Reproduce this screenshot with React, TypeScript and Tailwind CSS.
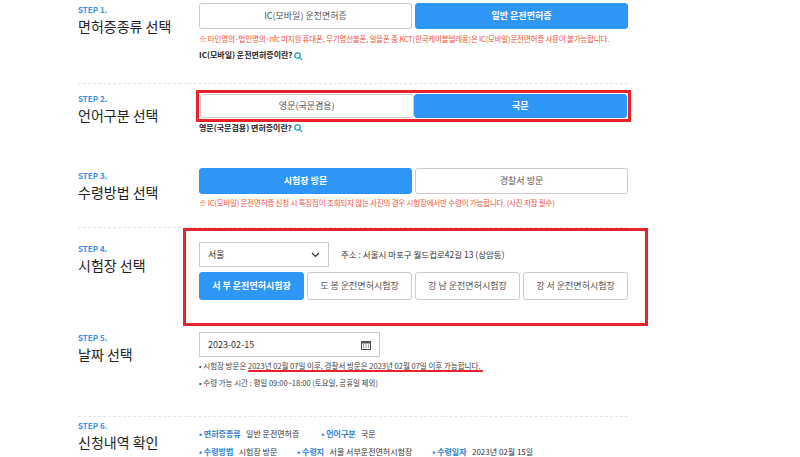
const blue = "bg-[#2e96f5] text-white border-[#2e96f5]";
const white = "bg-white text-[#555] border-[#ccc]";

function Btn({ on, children, w = "flex-1" }: { on?: boolean; children: React.ReactNode; w?: string }) {
  return (
    <div className={`${w} h-full flex items-center justify-center border rounded-[3px] text-[9px] ${on ? blue + " font-bold" : white}`}>
      {children}
    </div>
  );
}

function Label({ step, title }: { step: string; title: string }) {
  return (
    <div className="w-[121px] shrink-0 pl-[78px] box-content">
      <div className="text-[8px] font-bold text-[#3a8ee6] leading-[10px]">{step}</div>
      <div className="text-[14px] text-[#222] leading-[20px] mt-[1px] whitespace-nowrap">{title}</div>
    </div>
  );
}

const Search = () => (
  <svg width="9" height="9" viewBox="0 0 10 10" className="inline ml-[2px]">
    <circle cx="4" cy="4" r="3" fill="none" stroke="#1aa0c8" strokeWidth="1.4" />
    <path d="M6.2 6.2 L9 9" stroke="#1aa0c8" strokeWidth="1.4" />
  </svg>
);

const Sep = () => <div className="ml-[78px] w-[550px] border-t border-dashed border-[#e6e6e6]" />;

export default function App() {
  return (
    <div className="w-[800px] h-[457px] overflow-hidden bg-white relative" style={{ fontFamily: '"Noto Sans CJK KR", "Noto Sans", sans-serif' }}>
      {/* step 1 */}
      <div className="flex pt-[3px] h-[83px]">
        <div className="w-[199px] shrink-0 pt-[2px]"><Label step="STEP 1." title="면허증종류 선택" /></div>
        <div className="w-[429px]">
          <div className="flex gap-[3px] h-[26px]">
            <Btn>IC(모바일) 운전면허증</Btn>
            <Btn on>일반 운전면허증</Btn>
          </div>
          <div className="text-[7.5px] text-[#f0533c] mt-[4px] whitespace-nowrap tracking-[-0.2px]">※ 타인명의·법인명의·nfc 미지원 휴대폰, 무기명선불폰, 알뜰폰 중 KCT(한국케이블텔레콤)은 IC(모바일)운전면허증 사용이 불가능합니다.</div>
          <div className="text-[8px] font-bold text-[#222] mt-[5px]">IC(모바일) 운전면허증이란?<Search /></div>
        </div>
      </div>
      <Sep />
      {/* step 2 */}
      <div className="flex pt-[6px] h-[76px]">
        <div className="w-[199px] shrink-0 pt-[4px]"><Label step="STEP 2." title="언어구분 선택" /></div>
        <div className="w-[429px]">
          <div className="ml-[-3px] w-[435px] h-[32px] border-[3px] border-[#e8222b] p-[1px] flex">
            <Btn>영문(국문겸용)</Btn>
            <Btn on>국문</Btn>
          </div>
          <div className="text-[8px] font-bold text-[#222] mt-[0px]">영문(국문겸용) 면허증이란?<Search /></div>
        </div>
      </div>
      {/* step 3 */}
      <div className="flex pt-[8px] h-[67px]">
        <div className="w-[199px] shrink-0 pt-[3px]"><Label step="STEP 3." title="수령방법 선택" /></div>
        <div className="w-[429px]">
          <div className="flex gap-[3px] h-[26px]">
            <Btn on>시험장 방문</Btn>
            <Btn>경찰서 방문</Btn>
          </div>
          <div className="text-[7.5px] text-[#f0533c] mt-[3px] whitespace-nowrap tracking-[-0.2px]">※ IC(모바일) 운전면허증 신청 시 특징점이 조회되지 않는 사진의 경우 시험장에서만 수령이 가능합니다. (사진 지참 필수)</div>
        </div>
      </div>
      <Sep />
      {/* step 4 */}
      <div className="flex h-[99px]">
        <div className="w-[199px] shrink-0 pt-[16px]"><Label step="STEP 4." title="시험장 선택" /></div>
        <div className="ml-[-16px] w-[465px] h-[98px] border-[3px] border-[#e8222b] pl-[13px] pr-[17px] pt-[11px]">
          <div className="flex items-center h-[25px]">
            <div className="w-[130px] h-full border border-[#ccc] flex items-center justify-between px-[8px] text-[9px] text-[#333]">
              <span>서울</span>
              <svg width="9" height="6" viewBox="0 0 9 6"><path d="M1 1 L4.5 4.5 L8 1" fill="none" stroke="#333" strokeWidth="1.2" /></svg>
            </div>
            <div className="ml-[12px] text-[8.5px] text-[#333]">주소 : 서울시 마포구 월드컵로42길 13 (상암동)</div>
          </div>
          <div className="flex gap-[3px] h-[28px] mt-[5px]">
            <Btn on>서 부 운전면허시험장</Btn>
            <Btn>도 봉 운전면허시험장</Btn>
            <Btn>강 남 운전면허시험장</Btn>
            <Btn>강 서 운전면허시험장</Btn>
          </div>
        </div>
      </div>
      {/* step 5 */}
      <div className="flex pt-[5px] h-[89px]">
        <div className="w-[199px] shrink-0 pt-[1px]"><Label step="STEP 5." title="날짜 선택" /></div>
        <div className="w-[429px]">
          <div className="w-[181px] h-[25px] border border-[#ccc] flex items-center justify-between px-[8px] text-[9px] text-[#333]">
            <span>2023-02-15</span>
            <svg width="10" height="10" viewBox="0 0 10 10"><rect x="0.5" y="1.5" width="9" height="8" fill="none" stroke="#555" /><rect x="0.5" y="1.5" width="9" height="2" fill="#555" /><path d="M2 5h1M4.5 5h1M7 5h1M2 7h1M4.5 7h1M7 7h1" stroke="#555" /></svg>
          </div>
          <div className="relative text-[7.5px] text-[#444] mt-[3px] whitespace-nowrap">
            • 시험장 방문은 2023년 02월 07일 이후, 경찰서 방문은 2023년 02월 07일 이후 가능합니다.
            <div className="absolute left-[49px] top-[10px] w-[235px] h-[2px] rounded bg-[#e8222b]" />
          </div>
          <div className="text-[7.5px] text-[#444] mt-[6px]">• 수령 가능 시간 : 평일 09:00~18:00 (토요일, 공휴일 제외)</div>
        </div>
      </div>
      <Sep />
      {/* step 6 */}
      <div className="flex pt-[4px]">
        <div className="w-[199px] shrink-0"><Label step="STEP 6." title="신청내역 확인" /></div>
        <div className="w-[429px] text-[8px] text-[#333] pt-[7px]">
          <div className="flex gap-[22px]">
            <span><b className="text-[#2e7ed0] font-bold">• 면허증종류</b>&nbsp;&nbsp; 일반 운전면허증</span>
            <span><b className="text-[#2e7ed0] font-bold">• 언어구분</b>&nbsp;&nbsp; 국문</span>
          </div>
          <div className="flex gap-[20px] mt-[6px]">
            <span><b className="text-[#2e7ed0] font-bold">• 수령방법</b>&nbsp;&nbsp; 시험장 방문</span>
            <span><b className="text-[#2e7ed0] font-bold">• 수령지</b>&nbsp;&nbsp; 서울 서부운전면허시험장</span>
            <span><b className="text-[#2e7ed0] font-bold">• 수령일자</b>&nbsp;&nbsp; 2023년 02월 15일</span>
          </div>
        </div>
      </div>
    </div>
  );
}
